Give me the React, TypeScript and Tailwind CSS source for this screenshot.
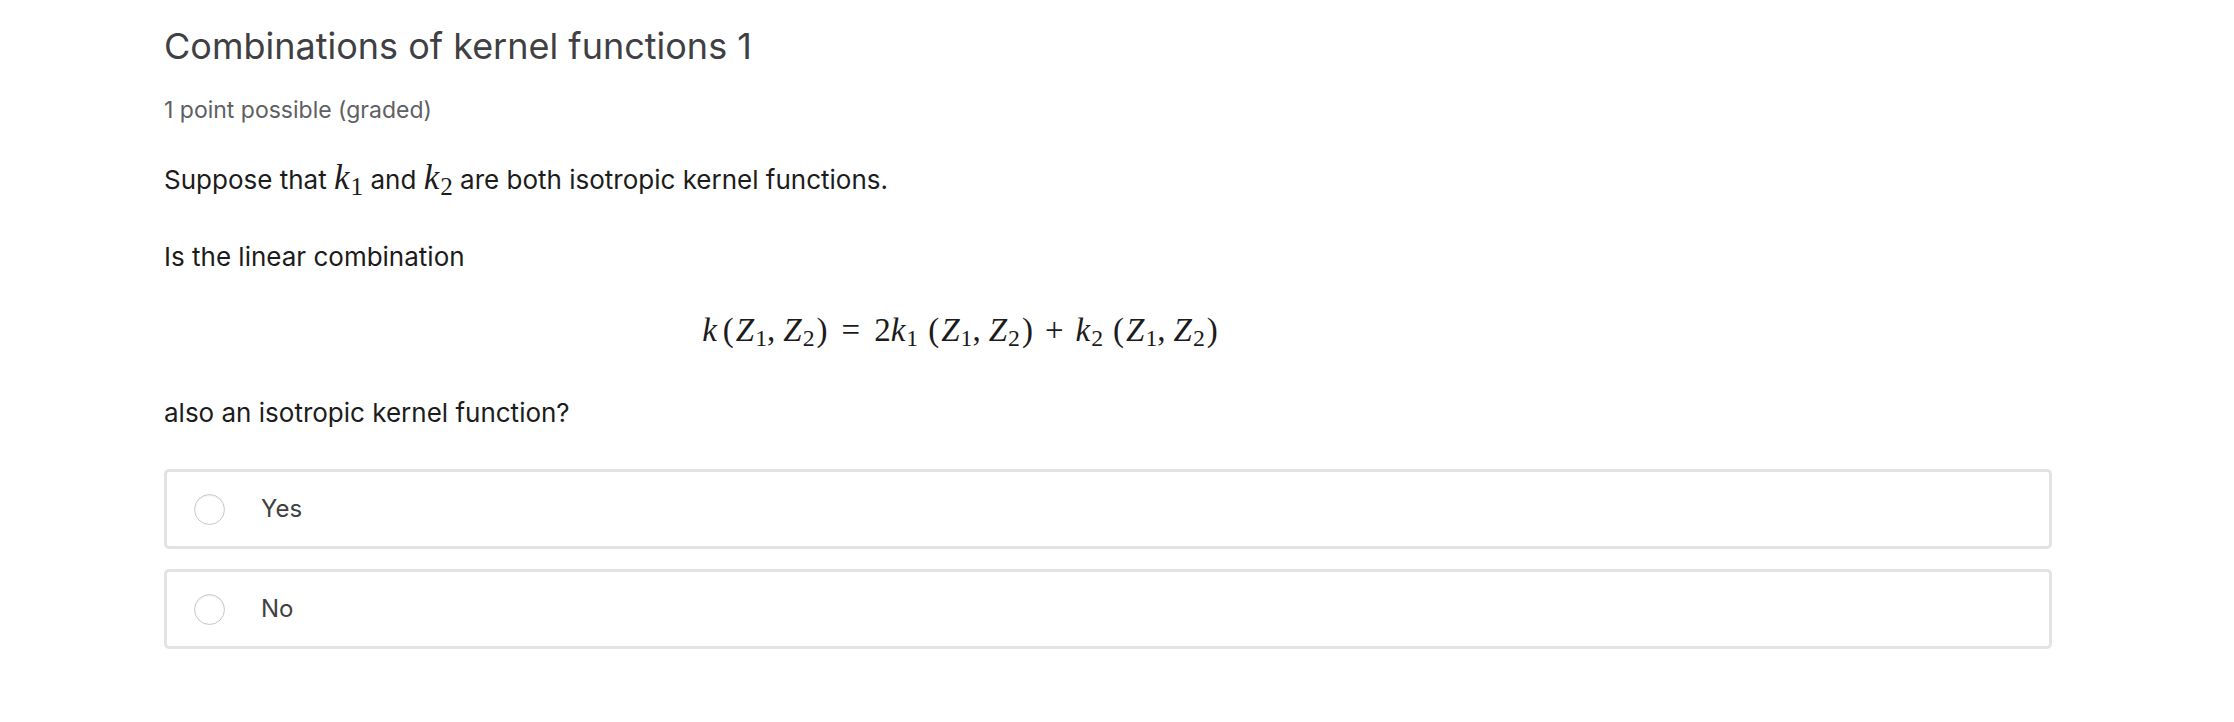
import React from "react";

function K({ sub }: { sub?: string }) {
  return (
    <span>
      <i>k</i>
      {sub && <span className="relative top-[0.22em] ml-[1px] text-[0.72em] not-italic">{sub}</span>}
    </span>
  );
}

function Z({ sub }: { sub: string }) {
  return (
    <span>
      <i>Z</i>
      <span className="relative top-[0.22em] ml-[1px] text-[0.72em] not-italic">{sub}</span>
    </span>
  );
}

function Args() {
  return (
    <span>
      <span className="ml-[6px] mr-[2px]">(</span>
      <Z sub="1" />
      <span className="mr-[8px]">,</span>
      <Z sub="2" />
      <span className="ml-[2px]">)</span>
    </span>
  );
}

function Option({ label }: { label: string }) {
  return (
    <label className="flex h-[80px] items-center rounded-[5px] border-[3px] border-[#e3e3e3] bg-white pl-[27px]">
      <span className="h-[31px] w-[31px] shrink-0 rounded-full border border-[#c9c9c9] bg-white shadow-[inset_0_1px_2px_rgba(0,0,0,0.08)]" />
      <span className="ml-[36px] text-[24px] leading-[30px] text-[#414141]">{label}</span>
    </label>
  );
}

const serif = { fontFamily: "'Liberation Serif', 'DejaVu Serif', serif" };

export default function App() {
  return (
    <div
      className="min-h-[722px] bg-white pl-[164px] pr-[182px] pt-[24px]"
      style={{ fontFamily: "Inter, 'Noto Sans', sans-serif" }}
    >
      <h3 className="text-[36px] leading-[44px] font-normal text-[#3f4043]">
        Combinations of kernel functions 1
      </h3>
      <div className="mt-[28px] text-[23px] leading-[28px] text-[#5e6063]">1 point possible (graded)</div>
      <p className="mt-[38px] text-[26px] leading-[36px] text-[#1c1c1c]">
        Suppose that{" "}
        <span className="text-[35px] leading-[20px]" style={serif}>
          <K sub="1" />
        </span>{" "}
        and{" "}
        <span className="text-[35px] leading-[20px]" style={serif}>
          <K sub="2" />
        </span>{" "}
        are both isotropic kernel functions.
      </p>
      <p className="mt-[41px] text-[26px] leading-[36px] text-[#1c1c1c]">Is the linear combination</p>
      <div className="mt-[33px] flex w-[1592px] justify-center text-[33px] leading-[44px] text-[#1c1c1c]" style={serif}>
        <span>
          <K />
          <Args />
          <span className="mx-[14px]">=</span>
          <span>2</span>
          <K sub="1" />
          <span className="ml-[4px]" />
          <Args />
          <span className="mx-[12px]">+</span>
          <K sub="2" />
          <span className="ml-[4px]" />
          <Args />
        </span>
      </div>
      <p className="mt-[40px] text-[26px] leading-[36px] text-[#1c1c1c]">also an isotropic kernel function?</p>
      <div className="mt-[38px] flex flex-col gap-[20px]">
        <Option label="Yes" />
        <Option label="No" />
      </div>
    </div>
  );
}
